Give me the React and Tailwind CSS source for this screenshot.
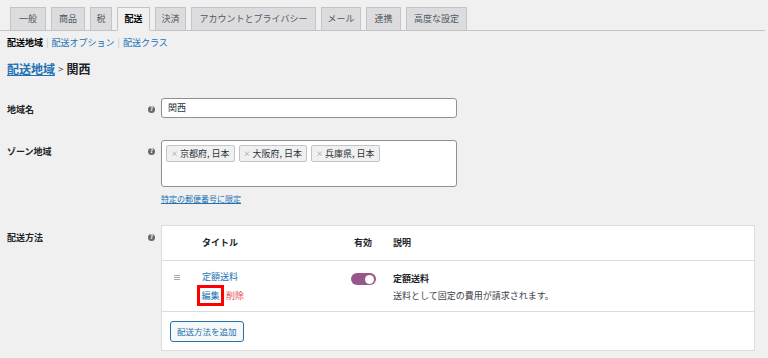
const tabs = [
  { label: '一般', w: 'w-[36px]' },
  { label: '商品', w: 'w-[34px]' },
  { label: '税', w: 'w-[22px]' },
  { label: '配送', w: 'w-[33px]', active: true },
  { label: '決済', w: 'w-[31px]' },
  { label: 'アカウントとプライバシー', w: 'w-[125px]' },
  { label: 'メール', w: 'w-[40px]' },
  { label: '連携', w: 'w-[35px]' },
  { label: '高度な設定', w: 'w-[61px]' },
];

const regions = ['京都府, 日本', '大阪府, 日本', '兵庫県, 日本'];

function Help() {
  return (
    <span className="flex h-[7px] w-[7px] items-center justify-center rounded-full bg-[#646970] text-[6px] font-bold leading-none text-white">
      ?
    </span>
  );
}

function Row({ label, top, children, className = '' }) {
  return (
    <div className={`flex ${className}`}>
      <div className={`w-[141px] shrink-0 text-[9px] font-bold text-[#1d2327] ${top}`}>{label}</div>
      <div className={`w-[13px] shrink-0 ${top}`}>
        <div className="flex h-[12px] items-center">
          <Help />
        </div>
      </div>
      <div className="flex-1">{children}</div>
    </div>
  );
}

export default function App() {
  return (
    <div
      className="h-[358px] w-[768px] overflow-hidden bg-[#f0f0f1] text-[#3c434a]"
      style={{ fontFamily: '"Noto Sans CJK JP", "Noto Sans", sans-serif' }}
    >
      <div className="mr-[3px] flex items-end gap-[5px] border-b border-[#c3c4c7] pl-[10px] pt-[7px]">
        {tabs.map((t) => (
          <div
            key={t.label}
            className={`${t.w} -mb-px flex h-[24px] shrink-0 items-center justify-center border border-[#c3c4c7] text-[9px] ${
              t.active
                ? 'border-b-[#f0f0f1] bg-[#f0f0f1] font-bold text-black'
                : 'bg-[#dcdcde] text-[#50575e]'
            }`}
          >
            {t.label}
          </div>
        ))}
      </div>

      <div className="pl-[7px] pr-[13px]">
        <div className="mt-[6px] flex items-center text-[9px] leading-[12px]">
          <span className="font-bold text-black">配送地域</span>
          <span className="mx-[3px] text-[#c3c4c7]">|</span>
          <span className="text-[#2271b1]">配送オプション</span>
          <span className="mx-[3px] text-[#c3c4c7]">|</span>
          <span className="text-[#2271b1]">配送クラス</span>
        </div>

        <div className="mt-[12px] flex items-center text-[12px] font-bold leading-[16px] text-[#1d2327]">
          <span className="text-[#2271b1] underline">配送地域</span>
          <span className="mx-[3px] text-[10px] font-normal text-[#50575e]">&gt;</span>
          <span>関西</span>
        </div>

        <Row label="地域名" top="pt-[5px]" className="mt-[21px]">
          <div className="flex h-[20px] w-[296px] items-center rounded-[3px] border border-[#8c8f94] bg-white px-[6px] text-[9px] text-[#2c3338]">
            関西
          </div>
        </Row>

        <Row label="ゾーン地域" top="pt-[5px]" className="mt-[22px]">
          <div className="h-[47px] w-[296px] rounded-[3px] border border-[#8c8f94] bg-white px-[4px] pt-[4px]">
            <div className="flex gap-[4px]">
              {regions.map((r) => (
                <span
                  key={r}
                  className="flex h-[17px] items-center gap-[2px] whitespace-nowrap rounded-[2px] border border-[#c3c4c7] bg-[#f0f0f1] px-[4px] text-[9px] text-[#2c3338]"
                >
                  <span className="text-[7px] text-[#8c8f94]">×</span>
                  {r}
                </span>
              ))}
            </div>
          </div>
          <div className="mt-[6px] text-[8px] leading-[12px] text-[#2271b1] underline">特定の郵便番号に限定</div>
        </Row>

        <Row label="配送方法" top="pt-[6px]" className="mt-[20px]">
          <div className="w-[594px] border border-[#dcdcde] bg-white text-[9px]">
            <div className="flex h-[35px] items-center border-b border-[#dcdcde] font-bold text-[#1d2327]">
              <div className="w-[40px]" />
              <div className="w-[152px]">タイトル</div>
              <div className="w-[39px]">有効</div>
              <div>説明</div>
            </div>
            <div className="flex h-[51px] border-b border-[#dcdcde] pt-[9px]">
              <div className="flex w-[40px] justify-end pr-[22px] pt-[5px]">
                <div className="flex w-[6px] flex-col gap-[1px]">
                  <span className="h-px bg-[#a7aaad]" />
                  <span className="h-px bg-[#a7aaad]" />
                  <span className="h-px bg-[#a7aaad]" />
                </div>
              </div>
              <div className="w-[149px] leading-[14px]">
                <div className="text-[#2271b1]">定額送料</div>
                <div className="mt-[1px] flex items-center">
                  <span className="-ml-[5px] flex h-[21px] w-[27px] items-center justify-center border-[3px] border-[#ff0000] text-[#2271b1]">
                    編集
                  </span>
                  <span className="ml-[2px] text-[#ea4a50]">削除</span>
                </div>
              </div>
              <div className="w-[42px] pt-[3px]">
                <div className="flex h-[12px] w-[25px] items-center justify-end rounded-full bg-[#96588a] pr-[2px]">
                  <span className="h-[9px] w-[9px] rounded-full bg-white" />
                </div>
              </div>
              <div className="leading-[17px]">
                <div className="font-bold text-[#1d2327]">定額送料</div>
                <div>送料として固定の費用が請求されます。</div>
              </div>
            </div>
            <div className="flex h-[38px] items-center pl-[8px]">
              <div className="flex h-[21px] items-center rounded-[3px] border border-[#2271b1] bg-[#f6f7f7] px-[6px] text-[8.5px] text-[#2271b1]">
                配送方法を追加
              </div>
            </div>
          </div>
        </Row>
      </div>
    </div>
  );
}
